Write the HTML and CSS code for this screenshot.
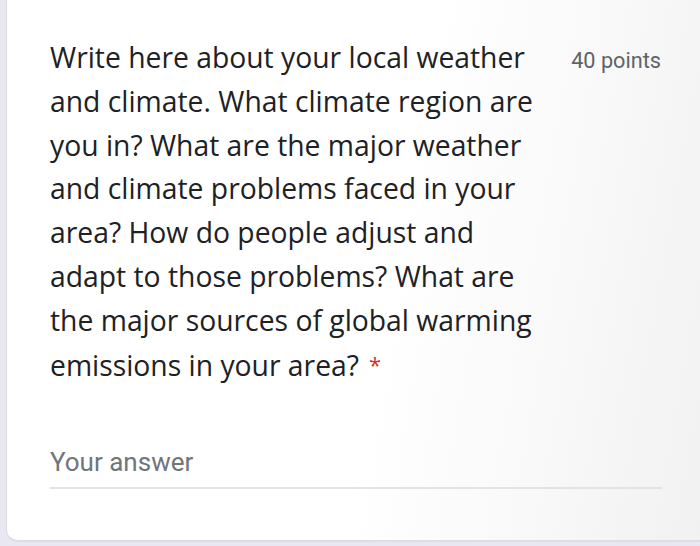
FILE: index.html
```html
<!DOCTYPE html>
<html>
<head>
<meta charset="utf-8">
<link rel="stylesheet" href="styles.css">
</head>
<body>
<div class="page">
  <div class="card">
    <div class="header">
      <div class="title">Write here about your local weather<br>and climate. What climate region are<br>you in? What are the major weather<br>and climate problems faced in your<br>area? How do people adjust and<br>adapt to those problems? What are<br>the major sources of global warming<br>emissions in your area?<span class="req">*</span></div>
      <div class="points">40 points</div>
    </div>
    <div class="answer">
      <div class="placeholder">Your answer</div>
    </div>
  </div>
</div>
</body>
</html>
```

FILE: styles.css
```css
html, body {
  margin: 0;
  padding: 0;
}
body {
  width: 700px;
  height: 546px;
  background: #e9e7f2;
  overflow: hidden;
}
.page {
  height: 546px;
  padding-left: 6px;
  box-sizing: border-box;
}
.card {
  height: 542px;
  box-sizing: border-box;
  background: linear-gradient(100deg, #ffffff 0%, #ffffff 55%, #f8f8f8 80%, #f1f1f1 100%);
  border-left: 1px solid #dcdbe2;
  border-bottom: 2px solid #dedde3;
  border-bottom-left-radius: 12px;
  padding: 36px 39px 0 43px;
}
.header {
  display: flex;
  justify-content: space-between;
  align-items: flex-start;
}
.title {
  white-space: nowrap;
  font-family: "Open Sans", sans-serif;
  font-size: 28.3px;
  line-height: 43.8px;
  color: #202124;
}
.req {
  color: #d93025;
  margin-left: 10px;
  font-size: 22px;
  vertical-align: 3px;
}
.points {
  padding-top: 3px;
  font-family: Roboto, sans-serif;
  font-size: 21.7px;
  color: #5f6368;
  line-height: 43.8px;
}
.answer {
  margin-top: 60px;
  width: 612px;
  border-bottom: 2px solid #e3e3e3;
  padding-bottom: 10px;
}
.placeholder {
  font-family: Roboto, sans-serif;
  font-size: 26px;
  color: #70757a;
  line-height: 30px;
}
```
